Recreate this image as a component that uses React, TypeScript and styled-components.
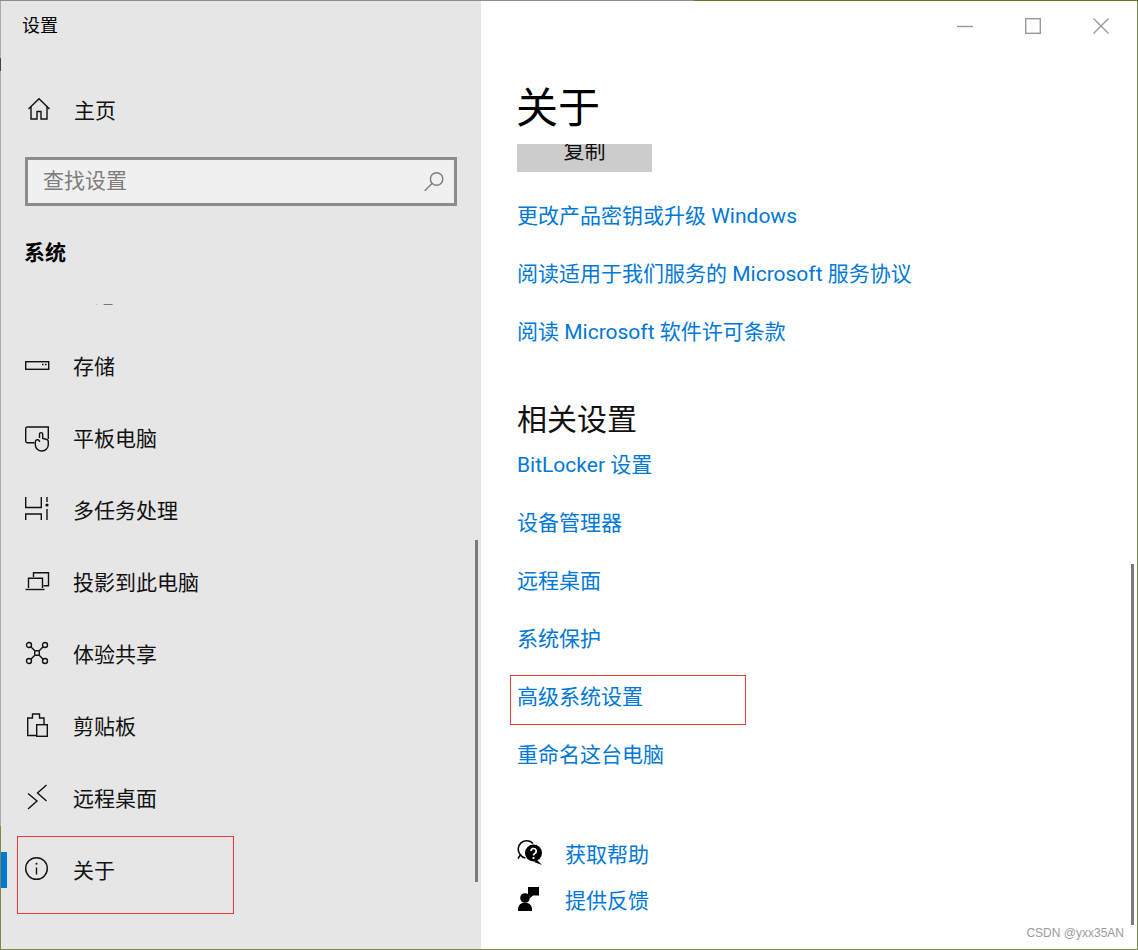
import React from "react";
import styled, { createGlobalStyle } from "styled-components";

const Global = createGlobalStyle`
  html, body { margin: 0; padding: 0; background: #fff; }
  #root { width: 1138px; height: 950px; overflow: hidden; }
  * { box-sizing: border-box; }
`;

const Frame = styled.div`
  position: relative;
  width: 1138px;
  height: 950px;
  padding: 1px;
  display: flex;
  overflow: hidden;
  font-family: Roboto, "Noto Sans CJK SC", sans-serif;
  font-size: 21px;
  color: #111;
  background:
    linear-gradient(to right, #8e8e8e 694px, #64752c 694px) top / 100% 1px no-repeat,
    linear-gradient(
        to bottom,
        #ababab 58px,
        #444 58px,
        #444 71px,
        #ababab 71px,
        #ababab 826px,
        #7a8c3f 826px
      )
      left / 1px 100% no-repeat,
    linear-gradient(#7a8c3f, #7a8c3f) bottom / 100% 1px no-repeat,
    linear-gradient(#7a8c3f, #7a8c3f) right / 1px 100% no-repeat,
    #fff;
`;

const Sidebar = styled.aside`
  position: relative;
  width: 480px;
  flex: none;
  background: #e6e6e6;
  display: flex;
  flex-direction: column;
`;

const AppTitle = styled.div`
  height: 50px;
  padding-left: 21px;
  font-size: 18px;
  line-height: 50px;
  color: #000;
`;

const HomeRow = styled.div`
  height: 60px;
  margin-top: 28px;
  padding-left: 27px;
  display: flex;
  align-items: center;
  gap: 24px;
`;

const SearchBox = styled.div`
  width: 432px;
  height: 49px;
  margin: 18px 0 0 24px;
  padding: 0 10px 0 15px;
  border: 3px solid #8c8c8c;
  background: #f0f0f0;
  color: #7d7d7d;
  display: flex;
  align-items: center;
  justify-content: space-between;
`;

const SearchText = styled.span`
  margin-bottom: 6px;
`;

const GroupTitle = styled.div`
  height: 40px;
  margin: 27px 0 0 23px;
  line-height: 40px;
  font-weight: 700;
  color: #000;
`;

const NavViewport = styled.div`
  flex: 1;
  min-height: 0;
  margin-top: 31px;
  overflow: hidden;
`;

const NavScroll = styled.div`
  margin-top: -46px;
`;

const NavRow = styled.div`
  position: relative;
  height: 72px;
  padding-left: 24px;
  display: flex;
  align-items: center;
  gap: 24px;
`;

const NavLabel = styled.span`
  margin-bottom: 3px;
`;

const ActiveMark = styled.span`
  position: absolute;
  left: 0;
  top: 18px;
  width: 6px;
  height: 36px;
  background: #0078d7;
`;

const Main = styled.main`
  flex: 1;
  min-width: 0;
  display: flex;
  flex-direction: column;
  background: #fff;
`;

const TitleButtons = styled.div`
  height: 34px;
  padding: 17px 28px 0 0;
  display: flex;
  justify-content: flex-end;
  gap: 52px;
`;

const PageTitle = styled.h1`
  margin: 38px 0 0 35px;
  height: 71px;
  font-size: 42px;
  line-height: 71px;
  font-weight: 400;
  color: #000;
`;

const ContentViewport = styled.div`
  flex: 1;
  min-height: 0;
  padding-left: 36px;
  overflow: hidden;
`;

const CopyButton = styled.div`
  width: 135px;
  height: 28px;
  background: #cccccc;
  text-align: center;
  line-height: 14px;
  color: #111;
`;

const LinkList = styled.div<{ $top: number }>`
  margin-top: ${(p) => p.$top}px;
  display: flex;
  flex-direction: column;
`;

const TextLink = styled.a`
  height: 58px;
  line-height: 58px;
  color: #0078d7;
  white-space: nowrap;
`;

const SectionTitle = styled.h2`
  margin: 41px 0 0;
  height: 34px;
  font-size: 30px;
  line-height: 36px;
  font-weight: 400;
  color: #111;
`;

const HelpList = styled.div`
  margin-top: 46px;
  display: flex;
  flex-direction: column;
`;

const HelpRow = styled.div`
  height: 46px;
  display: flex;
  align-items: center;
  gap: 22px;
`;

const HelpLink = styled.a`
  color: #0078d7;
`;

const RedBox = styled.div<{ $l: number; $t: number; $w: number; $h: number }>`
  position: absolute;
  left: ${(p) => p.$l}px;
  top: ${(p) => p.$t}px;
  width: ${(p) => p.$w}px;
  height: ${(p) => p.$h}px;
  border: 1px solid #f03a3a;
  pointer-events: none;
`;

const ScrollThumb = styled.div<{ $l: number; $t: number; $h: number }>`
  position: absolute;
  left: ${(p) => p.$l}px;
  top: ${(p) => p.$t}px;
  width: 3px;
  height: ${(p) => p.$h}px;
  background: #7a7a7a;
`;

const Watermark = styled.div`
  position: absolute;
  right: 14px;
  top: 926px;
  font-family: "Liberation Sans", sans-serif;
  font-size: 12px;
  line-height: 15px;
  color: #9c9c9c;
`;

const Icon = styled.svg.attrs({ fill: "none" })<{ $stroke?: string }>`
  flex: none;
  display: block;
  overflow: visible;
  stroke: ${(p) => p.$stroke ?? "#111"};
  stroke-width: 1.4;
`;

const I24 = ({ children }: { children: React.ReactNode }) => (
  <Icon width={24} height={24} viewBox="0 0 24 24">{children}</Icon>
);

const Blank = () => <I24>{null}</I24>;

const Storage = () => (
  <I24>
    <rect x="0.7" y="7.7" width="23" height="7.6" />
    <path d="M17 10.5h1.6M20 10.5h1.6" />
  </I24>
);

const Tablet = () => (
  <I24>
    <path d="M9.500 16.700H2.200a1.500 1.500 0 0 1-1.500-1.500V2.500A1.500 1.500 0 0 1 2.200 1h21.100v12" />
    <path d="M14.500 12V8.200a1.600 1.600 0 0 1 3.200 0v4.300l3.300.8a2.600 2.600 0 0 1 2.300 2.500v2.600a6.500 6.500 0 0 1-13 0.300v-2.700a2.200 2.200 0 0 1 4.200-1V16" />
  </I24>
);

const Multitask = () => (
  <I24>
    <path d="M0.700-1v10.500h15.600V-1" />
    <path d="M0.700 22v-6h15.600v6" />
    <path d="M22-1v5M22 11v11" />
    <circle cx="22" cy="7" r="1.600" fill="#111" stroke="none" />
  </I24>
);

const Project = () => (
  <I24>
    <path d="M8.500 7V2.700h15v13h-5" />
    <path d="M3.500 18V8.200h14V18" />
    <path d="M0.500 19.500h19" />
  </I24>
);

const Connected = () => (
  <I24>
    <circle cx="4" cy="3" r="2.500" />
    <circle cx="20" cy="3" r="2.500" />
    <circle cx="4" cy="19" r="2.500" />
    <circle cx="20" cy="19" r="2.500" />
    <rect x="9.700" y="8.700" width="4.600" height="4.600" rx="1" />
    <path d="M5.800 4.800l4 4M18.200 4.800l-4 4M5.800 17.200l4-4M18.200 17.200l-4-4" />
  </I24>
);

const Clipboard = () => (
  <I24>
    <path d="M11 21.500H2.700V4h4.800V0h7v4h4.500v6.500" />
    <rect x="11.700" y="10.700" width="10.600" height="11.600" />
  </I24>
);

const Remote = () => (
  <I24>
    <path d="M3 7.500l9 7.500-9 8" />
    <path d="M21.500-1L12.500 7l9 8" />
  </I24>
);

const Info = () => (
  <I24>
    <circle cx="11.500" cy="10.500" r="10.800" />
    <path d="M11.500 9.500v7" />
    <circle cx="11.500" cy="5.800" r="1" fill="#111" stroke="none" />
  </I24>
);

const Home = () => (
  <Icon width={22} height={22} viewBox="0 0 22 22">
    <path d="M0.500 11L11 0.800 21.500 11" />
    <path d="M3 8.600V21h6v-7.500h4V21h6V8.600" />
  </Icon>
);

const Search = () => (
  <Icon width={20} height={20} viewBox="0 0 20 20" $stroke="#7b7b7b">
    <circle cx="12.600" cy="7" r="6.200" />
    <path d="M8 11.500L0.700 18.800" />
  </Icon>
);

const Minimize = () => (
  <Icon width={16} height={16} viewBox="0 0 16 16" $stroke="#999">
    <path d="M0 8.500h16" />
  </Icon>
);

const Maximize = () => (
  <Icon width={16} height={16} viewBox="0 0 16 16" $stroke="#999">
    <rect x="0.700" y="0.700" width="14.600" height="14.600" />
  </Icon>
);

const Close = () => (
  <Icon width={16} height={16} viewBox="0 0 16 16" $stroke="#999">
    <path d="M0.500 0.500l15 15M15.500 0.500l-15 15" />
  </Icon>
);

const HelpIcon = () => (
  <Icon width={26} height={26} viewBox="0 0 26 26">
    <path d="M1 18.500l2.400-3.600A8 8 0 1 1 16 3.500" stroke="#000" strokeWidth="1.600" />
    <path d="M3.400 15a8 8 0 0 0 5 3" stroke="#000" strokeWidth="1.600" />
    <circle cx="16.500" cy="13" r="8.500" fill="#000" stroke="none" />
    <path d="M20 20l5 5-8-3z" fill="#000" stroke="none" />
    <path d="M14 11a2.600 2.600 0 1 1 3.800 2.400c-.9.500-1.300 1-1.300 2" stroke="#fff" strokeWidth="1.700" />
    <circle cx="16.500" cy="18" r="1.100" fill="#fff" stroke="none" />
  </Icon>
);

const FeedbackIcon = () => (
  <Icon width={26} height={26} viewBox="0 0 26 26">
    <circle cx="8" cy="12" r="4.800" fill="#000" stroke="none" />
    <path d="M1 25v-2.500A6.500 6.500 0 0 1 7.500 16.500h1a6.500 6.500 0 0 1 6.500 6V25z" fill="#000" stroke="none" />
    <path d="M11 1h11v8.500h-6l-3.500 3V9.500H11z" fill="#000" stroke="none" />
  </Icon>
);

const navItems: { label: string; icon: React.ReactNode; active?: boolean }[] = [
  { label: "电池", icon: <Blank /> },
  { label: "存储", icon: <Storage /> },
  { label: "平板电脑", icon: <Tablet /> },
  { label: "多任务处理", icon: <Multitask /> },
  { label: "投影到此电脑", icon: <Project /> },
  { label: "体验共享", icon: <Connected /> },
  { label: "剪贴板", icon: <Clipboard /> },
  { label: "远程桌面", icon: <Remote /> },
  { label: "关于", icon: <Info />, active: true },
];

const topLinks = [
  "更改产品密钥或升级 Windows",
  "阅读适用于我们服务的 Microsoft 服务协议",
  "阅读 Microsoft 软件许可条款",
];

const relatedLinks = [
  "BitLocker 设置",
  "设备管理器",
  "远程桌面",
  "系统保护",
  "高级系统设置",
  "重命名这台电脑",
];

export default function App() {
  return (
    <Frame>
      <Global />
      <Sidebar>
        <AppTitle>设置</AppTitle>
        <HomeRow>
          <Home />
          <span>主页</span>
        </HomeRow>
        <SearchBox>
          <SearchText>查找设置</SearchText>
          <Search />
        </SearchBox>
        <GroupTitle>系统</GroupTitle>
        <NavViewport>
          <NavScroll>
            {navItems.map((item) => (
              <NavRow key={item.label}>
                {item.active && <ActiveMark />}
                {item.icon}
                <NavLabel>{item.label}</NavLabel>
              </NavRow>
            ))}
          </NavScroll>
        </NavViewport>
      </Sidebar>
      <Main>
        <TitleButtons>
          <Minimize />
          <Maximize />
          <Close />
        </TitleButtons>
        <PageTitle>关于</PageTitle>
        <ContentViewport>
          <CopyButton>复制</CopyButton>
          <LinkList $top={15}>
            {topLinks.map((t) => (
              <TextLink key={t}>{t}</TextLink>
            ))}
          </LinkList>
          <SectionTitle>相关设置</SectionTitle>
          <LinkList $top={0}>
            {relatedLinks.map((t) => (
              <TextLink key={t}>{t}</TextLink>
            ))}
          </LinkList>
          <HelpList>
            <HelpRow>
              <HelpIcon />
              <HelpLink>获取帮助</HelpLink>
            </HelpRow>
            <HelpRow>
              <FeedbackIcon />
              <HelpLink>提供反馈</HelpLink>
            </HelpRow>
          </HelpList>
        </ContentViewport>
      </Main>
      <ScrollThumb $l={475} $t={540} $h={342} />
      <ScrollThumb $l={1131} $t={564} $h={361} />
      <RedBox $l={17} $t={836} $w={217} $h={78} />
      <RedBox $l={510} $t={675} $w={236} $h={50} />
      <Watermark>CSDN @yxx35AN</Watermark>
    </Frame>
  );
}
